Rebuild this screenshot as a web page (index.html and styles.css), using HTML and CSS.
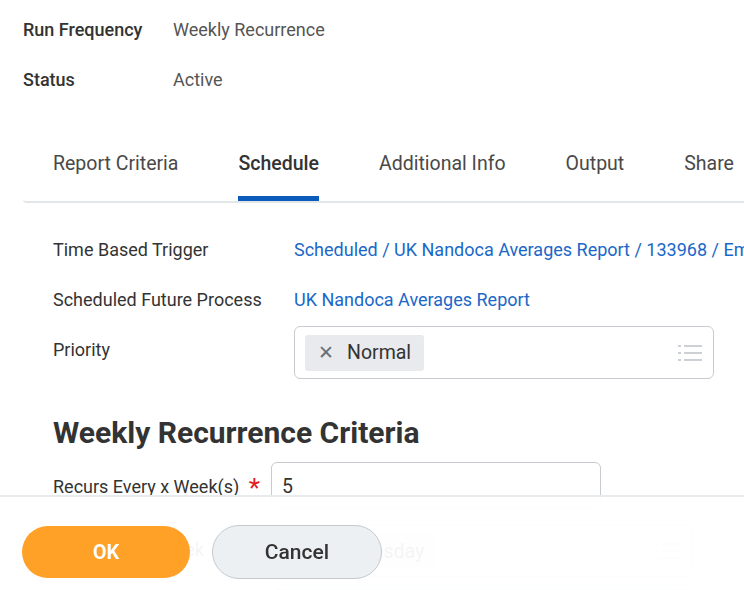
FILE: index.html
```html
<!DOCTYPE html>
<html lang="en">
<head>
  <meta charset="UTF-8">
  <title>Schedule Report</title>
  <link rel="stylesheet" href="styles.css">
</head>
<body>
  <!-- Summary -->
  <section class="summary">
    <div class="summary-row">
      <span class="summary-label">Run Frequency</span>
      <span class="summary-value">Weekly Recurrence</span>
    </div>
    <div class="summary-row">
      <span class="summary-label">Status</span>
      <span class="summary-value">Active</span>
    </div>
  </section>

  <!-- Tabs -->
  <nav class="tabs">
    <a href="#" class="tab">Report Criteria</a>
    <a href="#" class="tab active">Schedule</a>
    <a href="#" class="tab">Additional Info</a>
    <a href="#" class="tab">Output</a>
    <a href="#" class="tab">Share</a>
  </nav>

  <!-- Schedule form -->
  <section class="form">
    <div class="form-row">
      <span class="form-label">Time Based Trigger</span>
      <a href="#" class="link">Scheduled / UK Nandoca Averages Report / 133968 / Emma Smith</a>
    </div>
    <div class="form-row">
      <span class="form-label">Scheduled Future Process</span>
      <a href="#" class="link">UK Nandoca Averages Report</a>
    </div>
    <div class="form-row">
      <span class="form-label">Priority</span>
      <div class="select">
        <span class="chip"><span class="chip-x">&#x2715;</span>Normal</span>
        <svg class="list-icon" width="24" height="18" viewBox="0 0 24 18">
          <rect x="0" y="1" width="3" height="2" fill="#cdd1d5"/>
          <rect x="6" y="1" width="18" height="2" fill="#cdd1d5"/>
          <rect x="0" y="8" width="3" height="2" fill="#cdd1d5"/>
          <rect x="6" y="8" width="18" height="2" fill="#cdd1d5"/>
          <rect x="0" y="15" width="3" height="2" fill="#cdd1d5"/>
          <rect x="6" y="15" width="18" height="2" fill="#cdd1d5"/>
        </svg>
      </div>
    </div>

    <h2>Weekly Recurrence Criteria</h2>

    <div class="crit-row">
      <span class="crit-label">Recurs Every x Week(s) <span class="req">*</span></span>
      <div class="input">5</div>
    </div>
    <div class="crit-row">
      <span class="crit-label">Day(s) of the Week</span>
      <div class="select wide">
        <span class="chip"><span class="chip-x">&#x2715;</span>Wednesday</span>
        <svg class="list-icon" width="24" height="18" viewBox="0 0 24 18">
          <rect x="0" y="1" width="3" height="2" fill="#cdd1d5"/>
          <rect x="6" y="1" width="18" height="2" fill="#cdd1d5"/>
          <rect x="0" y="8" width="3" height="2" fill="#cdd1d5"/>
          <rect x="6" y="8" width="18" height="2" fill="#cdd1d5"/>
          <rect x="0" y="15" width="3" height="2" fill="#cdd1d5"/>
          <rect x="6" y="15" width="18" height="2" fill="#cdd1d5"/>
        </svg>
      </div>
    </div>
    <div class="crit-row">
      <span class="crit-label">Time of Day</span>
      <div class="select wide"></div>
    </div>
  </section>

  <!-- Footer actions -->
  <footer class="actions">
    <button class="btn btn-ok">OK</button>
    <button class="btn btn-cancel">Cancel</button>
  </footer>
</body>
</html>
```

FILE: styles.css
```css
:root {
  --text: #333333;
  --text-secondary: #555555;
  --link: #1a68c8;
  --blue: #0b5cba;
  --border: #c7cbd0;
  --line: #e3e6e9;
  --chip: #e8eaed;
  --orange: #ffa126;
}

* {
  margin: 0;
  padding: 0;
  box-sizing: border-box;
}

body {
  font-family: Roboto, "Liberation Sans", sans-serif;
  font-size: 18px;
  color: var(--text);
  background: #fff;
  overflow: hidden;
  white-space: nowrap;
}

a {
  text-decoration: none;
}

/* Summary */
.summary {
  padding: 4px 0 0 23px;
}

.summary-row {
  display: flex;
  height: 50px;
  align-items: center;
}

.summary-label {
  width: 150px;
  font-weight: 500;
}

.summary-value {
  color: var(--text-secondary);
}

/* Tabs */
.tabs {
  display: flex;
  gap: 60px;
  margin: 26px 0 0 23px;
  padding-left: 30px;
  height: 73px;
  border-bottom: 2px solid var(--line);
  border-bottom-left-radius: 4px;
}

.tab {
  display: flex;
  align-items: center;
  font-size: 19.5px;
  color: #494949;
  border-bottom: 5px solid transparent;
}

.tab.active {
  color: var(--text);
  font-weight: 500;
  border-bottom-color: var(--blue);
}

/* Form */
.form {
  padding: 22px 0 0 53px;
}

.form-row {
  display: flex;
  align-items: flex-start;
  min-height: 50px;
}

.form-label {
  width: 241px;
  flex-shrink: 0;
  line-height: 50px;
}

.link {
  line-height: 50px;
  color: var(--link);
}

.select {
  display: flex;
  align-items: center;
  justify-content: space-between;
  width: 420px;
  height: 53px;
  margin-top: 1px;
  padding: 0 11px 0 10px;
  border: 1px solid var(--border);
  border-radius: 6px;
}

.chip {
  display: flex;
  align-items: center;
  height: 36px;
  padding: 0 13px;
  background: var(--chip);
  border-radius: 3px;
  font-size: 19.5px;
}

.chip-x {
  color: #6b7076;
  font-size: 19px;
  margin-right: 13px;
}

.list-icon {
  display: block;
}

h2 {
  font-size: 30px;
  font-weight: 700;
  margin: 34px 0 9px;
  line-height: 40px;
}

/* Criteria */
.crit-row {
  display: flex;
  align-items: flex-start;
  margin-bottom: 12px;
}

.crit-label {
  width: 218px;
  flex-shrink: 0;
  line-height: 50px;
}

.req {
  color: #e31b23;
  font-size: 26px;
  margin-left: 5px;
  vertical-align: -4px;
}

.input {
  width: 330px;
  height: 47px;
  padding: 12px 10px 0;
  border: 1px solid var(--border);
  border-radius: 6px;
  font-size: 19.5px;
}

.select.wide {
  width: 421px;
  height: 52px;
  margin-top: 0;
}

/* Footer */
.actions {
  position: fixed;
  left: 0;
  right: 0;
  bottom: 0;
  height: 95px;
  display: flex;
  align-items: flex-start;
  gap: 22px;
  padding: 28px 0 0 22px;
  background: rgba(255, 255, 255, 0.95);
  border-top: 2px solid #e8ebed;
}

.btn {
  height: 52px;
  border-radius: 26px;
  font-family: Roboto, "Liberation Sans", sans-serif;
  font-size: 20px;
  cursor: pointer;
}

.btn-ok {
  width: 168px;
  margin-top: 1px;
  background: var(--orange);
  border: none;
  color: #fff;
  font-weight: 700;
}

.btn-cancel {
  width: 170px;
  height: 54px;
  border-radius: 27px;
  background: #edf0f2;
  border: 1px solid #c4cacf;
  color: var(--text);
  font-size: 21px;
  font-weight: 500;
}
```
